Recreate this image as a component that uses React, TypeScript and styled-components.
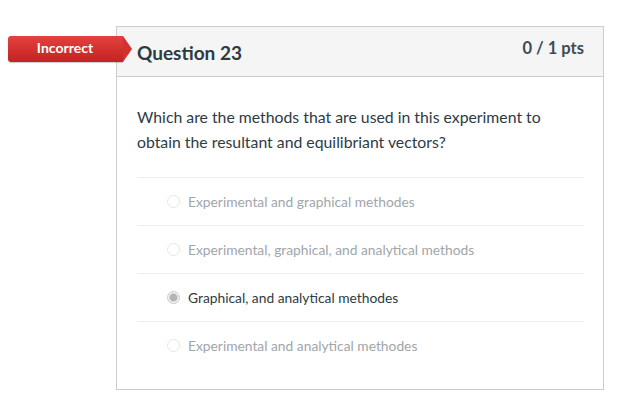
import React from "react";
import styled, { createGlobalStyle } from "styled-components";

const Global = createGlobalStyle`
  html, body { margin: 0; padding: 0; background: #fff; }
  body { font-family: Lato, "Open Sans", sans-serif; }
`;

const Page = styled.div`
  padding: 26px 0 0 116px;
`;

const Card = styled.div`
  position: relative;
  width: 486px;
  border: 1px solid #c7cdd1;
  background: #fff;
`;

const Badge = styled.div`
  position: absolute;
  left: -109px;
  top: 9px;
  width: 115px;
  height: 26px;
  background: linear-gradient(#e2413f, #c42421);
  color: #fff;
  font-weight: 700;
  font-size: 14px;
  line-height: 24px;
  text-align: center;
  border-radius: 3px 0 0 3px;
  padding-right: 1px;
  box-sizing: border-box;
  box-shadow: 0 1px 1px rgba(0,0,0,0.2);
  &::after {
    content: "";
    position: absolute;
    right: -9px;
    top: 0;
    border-top: 13px solid transparent;
    border-bottom: 13px solid transparent;
    border-left: 9px solid #d3302e;
  }
`;

const Header = styled.div`
  height: 49px;
  background: #f5f5f5;
  border-bottom: 1px solid #c7cdd1;
  display: flex;
  justify-content: space-between;
  padding: 0 19px 0 20px;
`;

const Title = styled.h2`
  margin: 0;
  padding-top: 14px;
  font-size: 19px;
  font-weight: 700;
  color: #2d3b45;
  line-height: 24px;
`;

const Points = styled.div`
  padding-top: 10px;
  font-size: 16.5px;
  font-weight: 700;
  color: #3d4a53;
  line-height: 22px;
`;

const Body = styled.div`
  padding: 28px 19px 20px 20px;
`;

const QuestionText = styled.p`
  margin: 0 0 23px;
  font-size: 15.8px;
  line-height: 24.5px;
  color: #2d3b45;
`;

const Answers = styled.div`
  display: flex;
  flex-direction: column;
`;

const Answer = styled.div<{ $selected?: boolean }>`
  height: 47px;
  border-top: 1px solid #eceef0;
  display: flex;
  align-items: center;
  padding-left: 30px;
  font-size: 13.8px;
  color: ${(p) => (p.$selected ? "#2d3b45" : "#a0a6aa")};
`;

const Radio = styled.span<{ $selected?: boolean }>`
  width: 11px;
  height: 11px;
  border-radius: 50%;
  border: 1px solid ${(p) => (p.$selected ? "#c9c9c9" : "#e6e6e6")};
  background: ${(p) => (p.$selected ? "radial-gradient(circle, #b5b5b5 0 3.5px, #f2f2f2 4.5px)" : "#fff")};
  margin-right: 8px;
  margin-top: -1px;
  flex: none;
`;

const answers = [
  { text: "Experimental and graphical methodes", selected: false },
  { text: "Experimental, graphical, and analytical methods", selected: false },
  { text: "Graphical, and analytical methodes", selected: true },
  { text: "Experimental and analytical methodes", selected: false },
];

export default function App() {
  return (
    <>
      <Global />
      <Page>
        <Card>
          <Badge>Incorrect</Badge>
          <Header>
            <Title>Question 23</Title>
            <Points>0 / 1 pts</Points>
          </Header>
          <Body>
            <QuestionText>
              Which are the methods that are used in this experiment to obtain the resultant and equilibriant vectors?
            </QuestionText>
            <Answers>
              {answers.map((a) => (
                <Answer key={a.text} $selected={a.selected}>
                  <Radio $selected={a.selected} />
                  {a.text}
                </Answer>
              ))}
            </Answers>
          </Body>
        </Card>
      </Page>
    </>
  );
}
